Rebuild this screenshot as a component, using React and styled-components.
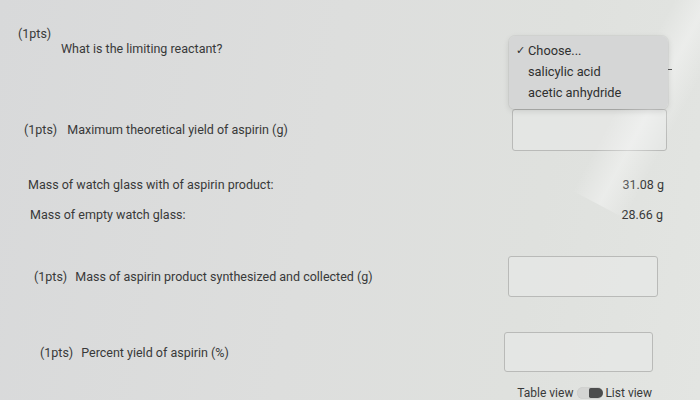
import React from 'react'
import styled, { createGlobalStyle } from 'styled-components'

const Global = createGlobalStyle`
  html, body { margin: 0; padding: 0; }
  body {
    width: 700px;
    height: 400px;
    overflow: hidden;
    font-family: Roboto, "Liberation Sans", Arial, sans-serif;
    color: #383939;
    background: linear-gradient(100deg, #d8d9da 0%, #dddedd 45%, #dfe1de 75%, #e3e5e2 100%);
  }
`

const Page = styled.div`
  position: relative;
  width: 700px;
  height: 400px;
  overflow: hidden;
  display: flex;
  flex-direction: column;
`

const Glare = styled.div`
  position: absolute;
  top: -40px;
  right: 10px;
  width: 60px;
  height: 260px;
  transform: rotate(28deg);
  background: linear-gradient(90deg, rgba(255,255,255,0) 0%, rgba(255,255,255,0.35) 50%, rgba(255,255,255,0) 100%);
  pointer-events: none;
`

const Row = styled.div`
  display: flex;
  align-items: center;
  justify-content: space-between;
  height: ${p => p.h}px;
  margin-top: ${p => p.mt || 0}px;
  padding-left: ${p => p.left}px;
  padding-right: ${p => p.right}px;
  font-size: 12.5px;
`

const QuestionRow = styled.div`
  display: flex;
  justify-content: space-between;
  height: 88px;
  margin-top: 26px;
  padding-left: 18px;
  padding-right: 32px;
`

const QuestionText = styled.div`
  display: flex;
  flex-direction: column;
  font-size: 12.5px;
`

const Points = styled.span`
  margin-right: ${p => p.gap || 8}px;
`

const Prompt = styled.span`
  margin-left: 43px;
`

const SelectWrap = styled.div`
  position: relative;
  width: 159px;
  height: 40px;
  margin-top: 10px;
`

const Menu = styled.div`
  position: absolute;
  top: 0;
  left: 0;
  width: 159px;
  height: 73px;
  box-sizing: border-box;
  padding: 7px 0 0 7px;
  border-radius: 6px;
  background: rgba(212, 213, 213, 0.95);
  box-shadow: 0 2px 6px rgba(0, 0, 0, 0.12), 0 0 0 1px rgba(0, 0, 0, 0.04);
  font-size: 12.8px;
  color: #2f3030;
  display: flex;
  flex-direction: column;
  gap: 6px;
`

const Option = styled.div`
  display: flex;
  align-items: center;
  height: 15px;
  padding-left: ${p => (p.checked ? 0 : 12)}px;
`

const Check = styled.span`
  font-size: 11px;
  width: 12px;
`

const Dash = styled.div`
  position: absolute;
  top: 33px;
  right: -4px;
  width: 4px;
  height: 1px;
  background: #555;
`

const Field = styled.div`
  width: ${p => p.w}px;
  height: ${p => p.h}px;
  box-sizing: border-box;
  border: 1px solid #b9bab8;
  border-radius: 3px;
  background: rgba(232, 233, 231, 0.6);
`

const Value = styled.span`
  font-size: 12.5px;
`

const Footer = styled.div`
  display: flex;
  align-items: center;
  justify-content: flex-end;
  margin-top: 14px;
  padding-right: 48px;
  font-size: 12px;
`

const Track = styled.div`
  position: relative;
  width: 26px;
  height: 12px;
  margin: 0 2px 0 4px;
  border-radius: 6px;
  background: #d4d5d3;
  box-shadow: inset 0 0 1px rgba(0,0,0,0.15);
`

const Knob = styled.div`
  position: absolute;
  top: 1px;
  right: 0;
  width: 14px;
  height: 10px;
  border-radius: 2px 6px 6px 2px;
  background: #4c4d4d;
`

export default function App() {
  return (
    <>
      <Global />
      <Page>
        <Glare />
        <QuestionRow>
          <QuestionText>
            <span>(1pts)</span>
            <Prompt>What is the limiting reactant?</Prompt>
          </QuestionText>
          <SelectWrap>
            <Menu>
              <Option checked><Check>✓</Check>Choose...</Option>
              <Option>salicylic acid</Option>
              <Option>acetic anhydride</Option>
            </Menu>
            <Dash />
          </SelectWrap>
        </QuestionRow>

        <Row h={42} mt={-4} left={24} right={33}>
          <span><Points gap={10}>(1pts)</Points>Maximum theoretical yield of aspirin (g)</span>
          <Field w={155} h={42} />
        </Row>

        <Row h={20} mt={24} left={28} right={36}>
          <span>Mass of watch glass with of aspirin product:</span>
          <Value>31.08 g</Value>
        </Row>
        <Row h={20} mt={10} left={30} right={37}>
          <span>Mass of empty watch glass:</span>
          <Value>28.66 g</Value>
        </Row>

        <Row h={41} mt={32} left={34} right={42}>
          <span><Points>(1pts)</Points>Mass of aspirin product synthesized and collected (g)</span>
          <Field w={150} h={41} />
        </Row>

        <Row h={40} mt={35} left={40} right={47}>
          <span><Points>(1pts)</Points>Percent yield of aspirin (%)</span>
          <Field w={149} h={40} />
        </Row>

        <Footer>
          <span>Table view</span>
          <Track><Knob /></Track>
          <span>List view</span>
        </Footer>
      </Page>
    </>
  )
}
